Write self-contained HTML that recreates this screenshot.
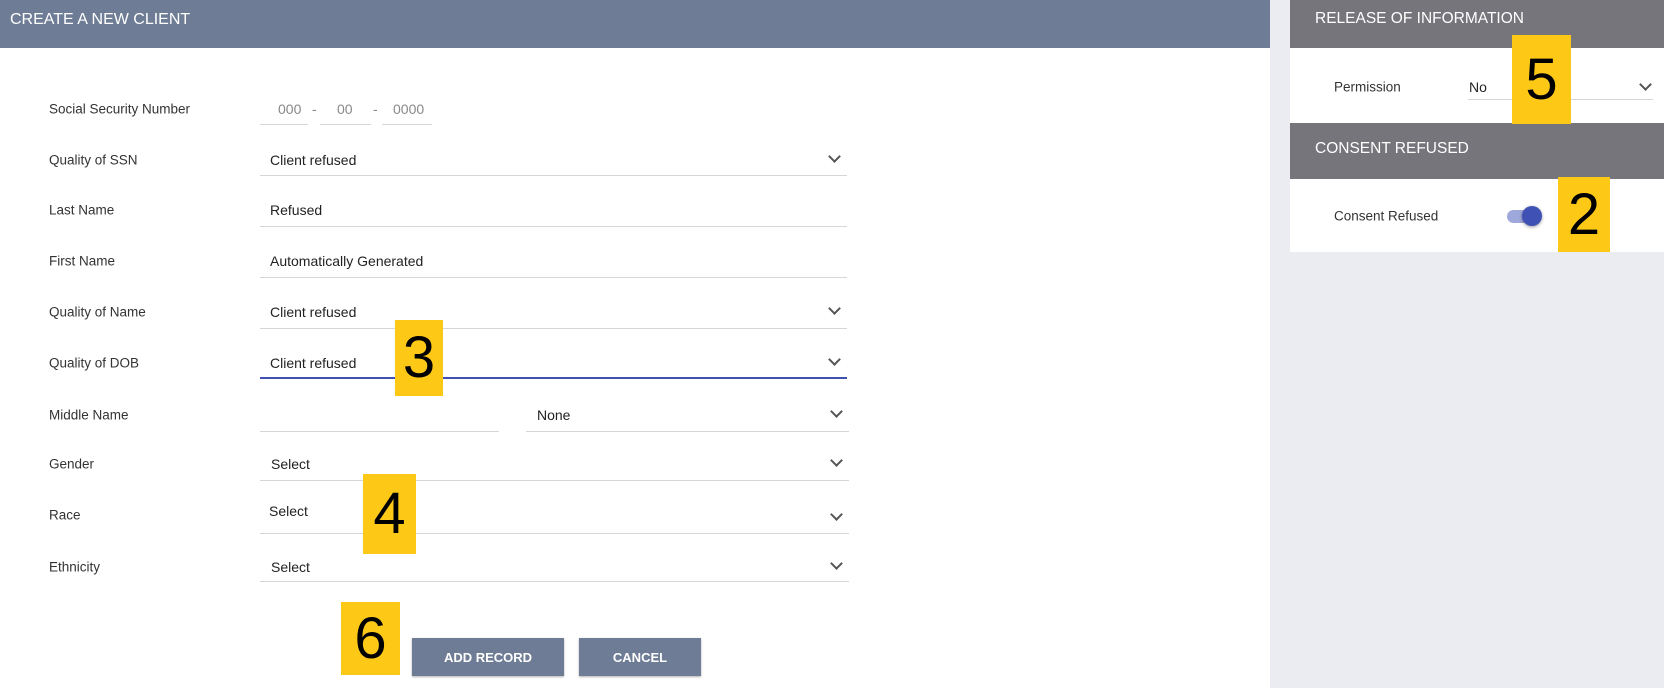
<!DOCTYPE html>
<html><head><style>
*{margin:0;padding:0;box-sizing:border-box}
body{width:1664px;height:688px;background:#eaecf1;font-family:"Liberation Sans",Arial,sans-serif;position:relative;overflow:hidden;color:#222}
.a{position:absolute}
.lbl{position:absolute;left:49px;font-size:13.5px;color:#333;transform:translateY(-50%)}
.val{position:absolute;font-size:14px;color:#222;transform:translateY(-50%)}
.line{position:absolute;height:1px;background:#d6d6d6}
.chev{position:absolute;width:9px;height:9px;border-right:2px solid #555;border-bottom:2px solid #555;transform:rotate(45deg)}
.yel{position:absolute;background:#fdc816;color:#000;font-size:58px;display:flex;align-items:center;justify-content:center;line-height:1}
.btn{position:absolute;background:#6e7d95;color:#fff;font-weight:bold;font-size:13px;display:flex;align-items:center;justify-content:center;box-shadow:0 1px 2px rgba(0,0,0,.3)}
</style></head><body>
<div class="a" style="left:0;top:0;width:1270px;height:688px;background:#fff"></div>
<div class="a" style="left:0;top:0;width:1270px;height:48px;background:#6e7d95"></div>
<div class="a" style="left:10px;top:11px;color:#fff;font-size:16px">CREATE A NEW CLIENT</div>

<div class="lbl" style="top:109px">Social Security Number</div>
<div class="val" style="top:109px;left:278px;color:#888">000</div>
<div class="val" style="top:109px;left:312px;color:#888">-</div>
<div class="val" style="top:109px;left:337px;color:#888">00</div>
<div class="val" style="top:109px;left:373px;color:#888">-</div>
<div class="val" style="top:109px;left:393px;color:#888">0000</div>
<div class="line" style="top:124px;left:260px;width:48px"></div>
<div class="line" style="top:124px;left:320px;width:51px"></div>
<div class="line" style="top:124px;left:382px;width:50px"></div>

<div class="lbl" style="top:160px">Quality of SSN</div>
<div class="val" style="top:160px;left:270px">Client refused</div>
<div class="chev" style="left:830px;top:152px"></div>
<div class="line" style="top:175px;left:260px;width:587px"></div>

<div class="lbl" style="top:210px">Last Name</div>
<div class="val" style="top:210px;left:270px">Refused</div>
<div class="line" style="top:226px;left:260px;width:587px"></div>

<div class="lbl" style="top:261px">First Name</div>
<div class="val" style="top:261px;left:270px">Automatically Generated</div>
<div class="line" style="top:277px;left:260px;width:587px"></div>

<div class="lbl" style="top:312px">Quality of Name</div>
<div class="val" style="top:312px;left:270px">Client refused</div>
<div class="chev" style="left:830px;top:304px"></div>
<div class="line" style="top:328px;left:260px;width:587px"></div>

<div class="lbl" style="top:363px">Quality of DOB</div>
<div class="val" style="top:363px;left:270px">Client refused</div>
<div class="chev" style="left:830px;top:355px"></div>
<div class="a" style="top:377px;left:260px;width:587px;height:2px;background:#3f51b5"></div>

<div class="lbl" style="top:415px">Middle Name</div>
<div class="line" style="top:431px;left:260px;width:239px"></div>
<div class="val" style="top:415px;left:537px">None</div>
<div class="chev" style="left:832px;top:407px"></div>
<div class="line" style="top:431px;left:526px;width:323px"></div>

<div class="lbl" style="top:464px">Gender</div>
<div class="val" style="top:464px;left:271px">Select</div>
<div class="chev" style="left:832px;top:456px"></div>
<div class="line" style="top:480px;left:260px;width:589px"></div>

<div class="lbl" style="top:515px">Race</div>
<div class="val" style="top:511px;left:269px">Select</div>
<div class="chev" style="left:832px;top:510px"></div>
<div class="line" style="top:533px;left:260px;width:589px"></div>

<div class="lbl" style="top:567px">Ethnicity</div>
<div class="val" style="top:567px;left:271px">Select</div>
<div class="chev" style="left:832px;top:559px"></div>
<div class="line" style="top:581px;left:260px;width:589px"></div>

<div class="btn" style="left:412px;top:638px;width:152px;height:38px">ADD RECORD</div>
<div class="btn" style="left:579px;top:638px;width:122px;height:38px">CANCEL</div>

<!-- right panel -->
<div class="a" style="left:1290px;top:0;width:374px;height:252px;background:#fff"></div>
<div class="a" style="left:1290px;top:0;width:374px;height:48px;background:#75757b"></div>
<div class="a" style="left:1315px;top:10px;color:#fff;font-size:15.5px">RELEASE OF INFORMATION</div>
<div class="lbl" style="left:1334px;top:87px">Permission</div>
<div class="val" style="left:1469px;top:87px">No</div>
<div class="chev" style="left:1641px;top:80px"></div>
<div class="line" style="top:99px;left:1468px;width:185px"></div>
<div class="a" style="left:1290px;top:123px;width:374px;height:56px;background:#75757b"></div>
<div class="a" style="left:1315px;top:140px;color:#fff;font-size:15.5px">CONSENT REFUSED</div>
<div class="lbl" style="left:1334px;top:216px">Consent Refused</div>
<div class="a" style="left:1507px;top:210px;width:34px;height:13px;border-radius:7px;background:#9fa8da"></div>
<div class="a" style="left:1522px;top:206px;width:20px;height:20px;border-radius:50%;background:#3f51b5;box-shadow:0 1px 3px rgba(0,0,0,.4)"></div>

<div class="yel" style="left:1512px;top:35px;width:59px;height:89px">5</div>
<div class="yel" style="left:1558px;top:177px;width:52px;height:75px">2</div>
<div class="yel" style="left:395px;top:320px;width:48px;height:76px">3</div>
<div class="yel" style="left:363px;top:474px;width:53px;height:80px">4</div>
<div class="yel" style="left:341px;top:602px;width:59px;height:73px">6</div>
</body></html>
